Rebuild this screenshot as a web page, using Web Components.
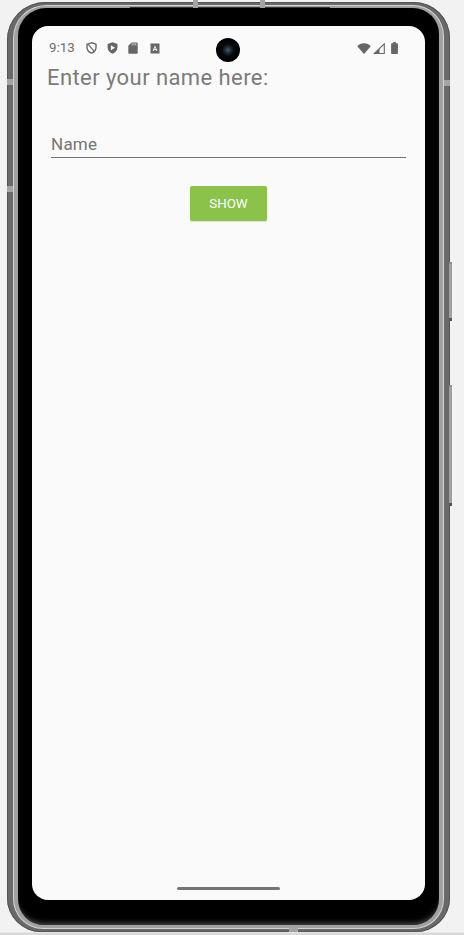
<!DOCTYPE html>
<html lang="en"><head><meta charset="utf-8"><title>Name</title>
<style>
html,body{margin:0;padding:0;background:#f2f2f2;font-family:Roboto,"Liberation Sans",sans-serif}
body{width:464px;height:935px;overflow:hidden}
</style></head><body>
<phone-frame>
  <status-bar></status-bar>
  <name-form></name-form>
</phone-frame>
<template id="t-frame"><style>
:host{display:block;box-sizing:border-box;width:464px;height:935px;padding:2px 14px 0 7px;background:linear-gradient(#f2f2f2 932px,#dadada 933px)}
.a{position:relative;box-sizing:border-box;width:443px;height:930px;border-radius:38px 36px 34px 34px;padding:3px 6px 3px 6px;background:#696969;box-shadow:inset 0 0 0 1px #555}
.b{box-sizing:border-box;height:100%;border-radius:33px 31px 30px 30px;padding:1px;background:#d4d4d4}
.c{box-sizing:border-box;height:100%;border-radius:32px 30px 29px 29px;padding:2px 4px 3px 4px;background:#a0a0a0}
.d{position:relative;box-sizing:border-box;height:100%;border-radius:28px 26px 26px 26px;padding:18px 14px 25px 14px;background:#000;box-shadow:inset 0 -5px 5px -3px #4a4a4a}
.s{position:relative;height:100%;border-radius:16px;background:#fafafa;overflow:hidden;display:flex;flex-direction:column}
.home{position:absolute;left:145px;bottom:10px;width:103px;height:3px;border-radius:2px;background:#757575}
.cam{position:absolute;left:198px;top:30px;width:24px;height:24px;border-radius:50%;background:radial-gradient(circle at 50% 50%,#4a5a66 0,#1e2e3a 3px,#06090d 6px,#000 12px)}
.tick{position:absolute;background:#a4a4a4}
.topdark{position:absolute;left:123px;top:5px;width:200px;height:1px;background:#333}
.btn{position:absolute;right:-2px;width:3px;background:#a0a0a0;border-top:2px solid #8a8a8a;border-bottom:3px solid #555}
</style>
<div class="a">
  <div class="b"><div class="c"><div class="d"><div class="s"><slot></slot><div class="home"></div></div><div class="cam"></div></div></div></div>
  <div class="topdark"></div>
  <div class="tick" style="left:186px;top:-2px;width:5px;height:8px"></div>
  <div class="tick" style="left:253px;top:-2px;width:5px;height:8px"></div>
  <div class="tick" style="left:0;top:77px;width:6px;height:6px"></div>
  <div class="tick" style="left:0;top:184px;width:6px;height:6px"></div>
  <div class="tick" style="right:0;top:78px;width:6px;height:6px"></div>
  <div class="tick" style="left:282px;bottom:0;width:9px;height:4px"></div>
  <div class="btn" style="top:260px;height:54px"></div>
  <div class="btn" style="top:383px;height:116px"></div>
</div></template>
<template id="t-status"><style>
:host{display:flex;align-items:center;box-sizing:border-box;height:37px;padding:7px 0 0 17px;color:#6e6e6e;font:13.300px/16px Roboto,sans-serif;flex:none}
svg{display:block;fill:#666;flex:none}
.t{width:37px}
.g{display:flex;align-items:center}
.r{margin-left:auto;margin-right:26px;display:flex;align-items:center}
</style>
<span class="t">9:13</span>
<div class="g">
 <svg width="11" height="12" viewBox="0 0 11 12" style="margin-right:10px"><path d="M5.500.8 1 2.200v3.100c0 2.900 2 4.900 4.500 5.900C8 10.200 10 8.200 10 5.300V2.200z" fill="none" stroke="#666" stroke-width="1.400"/><path d="M2.200 2.400 8.300 9.400" stroke="#666" stroke-width="1.200"/></svg>
 <svg width="11" height="12" viewBox="0 0 11 12" style="margin-right:10px"><path d="M5.500.2 .6 1.900v3.600c0 2.900 2.100 5.300 4.900 6.200 2.800-.9 4.900-3.300 4.900-6.200V1.900z"/><path d="M3.900 3.300v5l4.200-2.500z" fill="#fafafa"/></svg>
 <svg width="10" height="12" viewBox="0 0 10 12" style="margin-right:12px"><path d="M3.500.5H8.800c.5 0 .9.4.9.9v9.400c0 .5-.4.9-.9.9H1.200c-.5 0-.9-.4-.9-.9V3.700z"/><path d="M4.200 1.200v2.200M6 1.200v2.200M7.800 1.200v2.200" stroke="#fafafa" stroke-width=".7"/></svg>
 <svg width="10" height="11" viewBox="0 0 10 11" style="margin-left:-.5px"><path d="M.5.500h9v10h-9z"/><path d="M5 2.200 2.600 8h1.100l.4-1.100h1.900L6.400 8h1.100L5 2.200zM4.400 6 5 4.300 5.600 6z" fill="#fafafa"/></svg>
</div>
<div class="r">
 <svg width="14" height="11" viewBox="0 0 14 11"><path d="M7 11 .2 3.300C2 1.400 4.300.3 7 .3s5 1.100 6.800 3z"/></svg>
 <svg width="12" height="11" viewBox="0 0 12 11" style="margin-left:2px"><path d="M11.300.8V10.500H1.200z" fill="none" stroke="#666" stroke-width="1.100"/><path d="M6.500 5.500V10.500H1.200z"/></svg>
 <svg width="7" height="12" viewBox="0 0 7 12" style="margin-left:6px;margin-right:1px"><path d="M2.200 0h2.600v1.200h1.400c.4 0 .7.300.7.700v9.400c0 .4-.3.700-.7.700H.8c-.4 0-.7-.3-.7-.7V1.900c0-.4.300-.7.700-.7h1.400z"/></svg>
</div></template>
<template id="t-form"><style>
:host{display:flex;flex-direction:column;flex:none;color:#757575;font-family:Roboto,sans-serif}
h1{margin:0;padding-left:15px;font:400 22px/30px Roboto,sans-serif;letter-spacing:.42px;color:#7a7a7a;height:30px}
.f{margin:39px 19px 0 19px;height:26px;box-sizing:border-box;border-bottom:1.500px solid #707070;font:17px/24px Roboto,sans-serif;letter-spacing:.25px;color:#757575}
.row{display:flex;justify-content:center;margin-top:28px}
button{all:unset;box-sizing:border-box;width:77px;height:35px;background:#8bc34a;border-radius:2px;color:#fff;font:13.300px/35px Roboto,sans-serif;text-align:center;box-shadow:0 1px 1px rgba(0,0,0,.12)}
</style>
<h1>Enter your name here:</h1>
<div class="f">Name</div>
<div class="row"><button>SHOW</button></div></template>
<script>
function def(n,t){customElements.define(n,class extends HTMLElement{constructor(){super();this.attachShadow({mode:"open"}).appendChild(document.getElementById(t).content.cloneNode(true))}})}
def("phone-frame","t-frame");def("status-bar","t-status");def("name-form","t-form");
</script>
</body></html>
